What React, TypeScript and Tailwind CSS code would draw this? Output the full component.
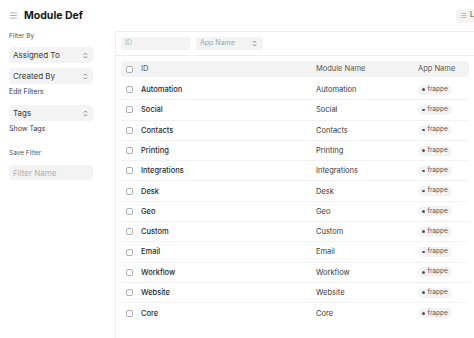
import { Menu, List } from "lucide-react";

type ModuleRow = {
  id: string;
  app: string;
};

const rows: ModuleRow[] = [
  { id: "Automation", app: "frappe" },
  { id: "Social", app: "frappe" },
  { id: "Contacts", app: "frappe" },
  { id: "Printing", app: "frappe" },
  { id: "Integrations", app: "frappe" },
  { id: "Desk", app: "frappe" },
  { id: "Geo", app: "frappe" },
  { id: "Custom", app: "frappe" },
  { id: "Email", app: "frappe" },
  { id: "Workflow", app: "frappe" },
  { id: "Website", app: "frappe" },
  { id: "Core", app: "frappe" },
];

function Chevrons() {
  return (
    <svg width="5" height="7" viewBox="0 0 5 7" fill="none" stroke="#6b7280" strokeWidth="0.9">
      <path d="M1 2.5 L2.5 1 L4 2.5" />
      <path d="M1 4.5 L2.5 6 L4 4.5" />
    </svg>
  );
}

function SideSelect({ label }: { label: string }) {
  return (
    <div className="flex h-[16px] w-[84px] items-center justify-between rounded-[4px] bg-[#f3f3f3] pl-[4px] pr-[5px] text-[8px] text-[#383838]">
      <span>{label}</span>
      <Chevrons />
    </div>
  );
}

function Checkbox() {
  return <div className="h-[7px] w-[7px] rounded-[2px] border border-[#a8adb4] bg-white" />;
}

export default function App() {
  return (
    <div className="flex h-[338px] w-[474px] flex-col overflow-hidden bg-white font-['Inter',sans-serif] text-[#1f272e]">
      <header className="flex h-[31px] shrink-0 items-center justify-between pl-[9px]">
        <div className="flex items-center gap-[6px]">
          <Menu size={9} strokeWidth={1.5} className="text-[#6b7280]" />
          <h1 className="text-[10.5px] font-bold text-[#171717]">Module Def</h1>
        </div>
        <div className="mr-[-40px] flex h-[14px] w-[58px] items-center gap-[3px] rounded-[3px] bg-[#f3f3f3] pl-[4px] text-[7px] text-[#383838]">
          <List size={7} strokeWidth={1.5} className="text-[#6b7280]" />
          <span>List View</span>
        </div>
      </header>
      <div className="flex flex-1">
        <aside className="w-[115px] shrink-0 px-[9px] text-[#383838]">
          <div className="pt-[1px] text-[6.5px] leading-[8px] text-[#555]">Filter By</div>
          <div className="mt-[7px] flex flex-col gap-[5px]">
            <SideSelect label="Assigned To" />
            <SideSelect label="Created By" />
          </div>
          <div className="mt-[3px] text-[7px] leading-[10px]">Edit Filters</div>
          <div className="mt-[8px]">
            <SideSelect label="Tags" />
          </div>
          <div className="mt-[3px] text-[7px] leading-[10px]">Show Tags</div>
          <div className="mt-[15px] text-[6.5px] leading-[8px] text-[#555]">Save Filter</div>
          <div className="mt-[8px] flex h-[15px] w-[84px] items-center rounded-[4px] bg-[#f3f3f3] pl-[4px] text-[8px] text-[#b0b0b0]">
            Filter Name
          </div>
        </aside>
        <main className="flex-1 border-l border-t border-[#ededed] bg-white">
          <div className="flex h-[24px] items-center gap-[6px] border-b border-[#ededed] pl-[5px]">
            <div className="flex h-[13px] w-[69px] items-center rounded-[3px] bg-[#f3f3f3] pl-[4px] text-[7px] text-[#b0b0b0]">
              ID
            </div>
            <div className="flex h-[13px] w-[67px] items-center justify-between rounded-[3px] bg-[#f3f3f3] pl-[4px] pr-[6px] text-[7px] text-[#9ca3af]">
              <span>App Name</span>
              <Chevrons />
            </div>
          </div>
          <div className="px-[5px] pt-[5px]">
            <div className="mb-[3px] flex h-[16px] items-center rounded-[3px] bg-[#f3f3f3] text-[7.5px] text-[#555]">
              <div className="w-[20px] pl-[5px]">
                <Checkbox />
              </div>
              <div className="w-[175px]">ID</div>
              <div className="w-[102px]">Module Name</div>
              <div>App Name</div>
            </div>
            {rows.map((row, i) => (
              <div
                key={row.id}
                className={
                  "flex h-[20.3px] items-center text-[7.5px] " +
                  (i < rows.length - 1 ? "border-b border-[#f2f2f2]" : "")
                }
              >
                <div className="w-[20px] pl-[5px]">
                  <Checkbox />
                </div>
                <div className="w-[175px] font-medium text-[#1f272e]">{row.id}</div>
                <div className="w-[102px] text-[#383838]">{row.id}</div>
                <div>
                  <span className="flex h-[10px] items-center gap-[3px] rounded-full bg-[#f3f3f3] px-[4px] text-[6.5px] text-[#555]">
                    <span className="h-[2.5px] w-[2.5px] rounded-full bg-[#555]" />
                    {row.app}
                  </span>
                </div>
              </div>
            ))}
          </div>
        </main>
      </div>
    </div>
  );
}
